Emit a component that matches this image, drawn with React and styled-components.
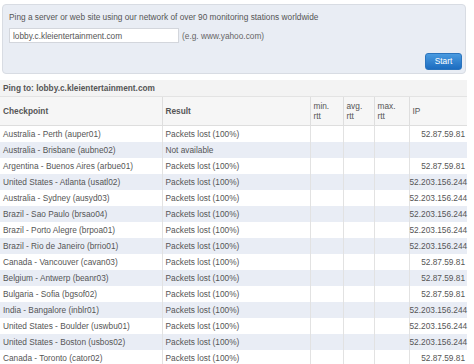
import styled, { createGlobalStyle } from "styled-components";

const rows = [
  ["Australia - Perth (auper01)", "Packets lost (100%)", "52.87.59.81"],
  ["Australia - Brisbane (aubne02)", "Not available", ""],
  ["Argentina - Buenos Aires (arbue01)", "Packets lost (100%)", "52.87.59.81"],
  ["United States - Atlanta (usatl02)", "Packets lost (100%)", "52.203.156.244"],
  ["Australia - Sydney (ausyd03)", "Packets lost (100%)", "52.203.156.244"],
  ["Brazil - Sao Paulo (brsao04)", "Packets lost (100%)", "52.203.156.244"],
  ["Brazil - Porto Alegre (brpoa01)", "Packets lost (100%)", "52.203.156.244"],
  ["Brazil - Rio de Janeiro (brrio01)", "Packets lost (100%)", "52.203.156.244"],
  ["Canada - Vancouver (cavan03)", "Packets lost (100%)", "52.87.59.81"],
  ["Belgium - Antwerp (beanr03)", "Packets lost (100%)", "52.87.59.81"],
  ["Bulgaria - Sofia (bgsof02)", "Packets lost (100%)", "52.87.59.81"],
  ["India - Bangalore (inblr01)", "Packets lost (100%)", "52.203.156.244"],
  ["United States - Boulder (uswbu01)", "Packets lost (100%)", "52.203.156.244"],
  ["United States - Boston (usbos02)", "Packets lost (100%)", "52.203.156.244"],
  ["Canada - Toronto (cator02)", "Packets lost (100%)", "52.87.59.81"],
];

const GlobalStyle = createGlobalStyle`
  body {
    margin: 0;
    background: #fff;
    font-family: "Liberation Sans", Arial, sans-serif;
    font-size: 8.3px;
    color: #555;
  }
`;

const Page = styled.div`
  padding-top: 4px;
  width: 474px;
`;

const Panel = styled.div`
  margin-left: 2px;
  width: 464px;
  height: 70px;
  box-sizing: border-box;
  padding: 5px 3px 0 6px;
  background: #e9edf4;
  border: 1px solid #d8dce3;
  border-radius: 4px;
  display: flex;
  flex-direction: column;
`;

const Intro = styled.div`
  line-height: 14px;
  color: #555;
`;

const InputRow = styled.div`
  display: flex;
  align-items: center;
  gap: 3px;
  margin-top: 4px;
`;

const Host = styled.input`
  width: 170px;
  height: 15px;
  box-sizing: border-box;
  border: 1px solid #d3d6dc;
  background: #fff;
  padding: 0 3px;
  font-family: inherit;
  font-size: 8.3px;
  color: #555;
  outline: none;
`;

const Hint = styled.span`
  color: #666;
`;

const Actions = styled.div`
  display: flex;
  justify-content: flex-end;
  margin-top: 10px;
`;

const StartButton = styled.button`
  width: 37px;
  height: 17px;
  padding: 0;
  border: 1px solid #2b74bd;
  border-radius: 3px;
  background: linear-gradient(#4a9be0, #1c6cc0);
  color: #fff;
  font-family: inherit;
  font-size: 8.3px;
  line-height: 15px;
`;

const Table = styled.table`
  margin-top: 6px;
  width: 467px;
  table-layout: fixed;
  border-collapse: collapse;
`;

const Caption = styled.th`
  height: 16px;
  padding: 0 3px;
  text-align: left;
  font-weight: bold;
  color: #555;
  background: #f3f3f3;
  border-bottom: 1px solid #e3e3e3;
`;

const HeadCell = styled.th`
  height: 28px;
  padding: 0 3px;
  text-align: left;
  vertical-align: middle;
  font-weight: ${(p) => (p.$small ? "normal" : "bold")};
  line-height: 10px;
  color: #555;
  background: #f6f6f6;
  border-left: 1px solid #dedede;
  border-bottom: 1px solid #dedede;
  &:first-child {
    border-left: none;
  }
`;

const Row = styled.tr`
  background: ${(p) => (p.$shade ? "#e9edf5" : "#fff")};
`;

const Cell = styled.td`
  height: 16px;
  padding: ${(p) => (p.$right ? "0 2px 0 0" : "0 3px")};
  line-height: 14px;
  white-space: nowrap;
  overflow: ${(p) => (p.$right ? "visible" : "hidden")};
  color: #555;
  text-align: ${(p) => (p.$right ? "right" : "left")};
  border-left: 1px solid #e2e2e2;
  &:first-child {
    border-left: none;
  }
`;

export default function App() {
  return (
    <Page>
      <GlobalStyle />
      <Panel>
        <Intro>Ping a server or web site using our network of over 90 monitoring stations worldwide</Intro>
        <InputRow>
          <Host defaultValue="lobby.c.kleientertainment.com" />
          <Hint>(e.g. www.yahoo.com)</Hint>
        </InputRow>
        <Actions>
          <StartButton>Start</StartButton>
        </Actions>
      </Panel>
      <Table>
        <colgroup>
          <col style={{ width: 162 }} />
          <col style={{ width: 148 }} />
          <col style={{ width: 33 }} />
          <col style={{ width: 31 }} />
          <col style={{ width: 35 }} />
          <col style={{ width: 58 }} />
        </colgroup>
        <thead>
          <tr>
            <Caption colSpan={6}>Ping to: lobby.c.kleientertainment.com</Caption>
          </tr>
          <tr>
            <HeadCell>Checkpoint</HeadCell>
            <HeadCell>Result</HeadCell>
            <HeadCell $small>
              min.
              <br />
              rtt
            </HeadCell>
            <HeadCell $small>
              avg.
              <br />
              rtt
            </HeadCell>
            <HeadCell $small>
              max.
              <br />
              rtt
            </HeadCell>
            <HeadCell $small>IP</HeadCell>
          </tr>
        </thead>
        <tbody>
          {rows.map(([place, result, ip], i) => (
            <Row key={place} $shade={i % 2 === 1}>
              <Cell>{place}</Cell>
              <Cell>{result}</Cell>
              <Cell />
              <Cell />
              <Cell />
              <Cell $right>{ip}</Cell>
            </Row>
          ))}
        </tbody>
      </Table>
    </Page>
  );
}
